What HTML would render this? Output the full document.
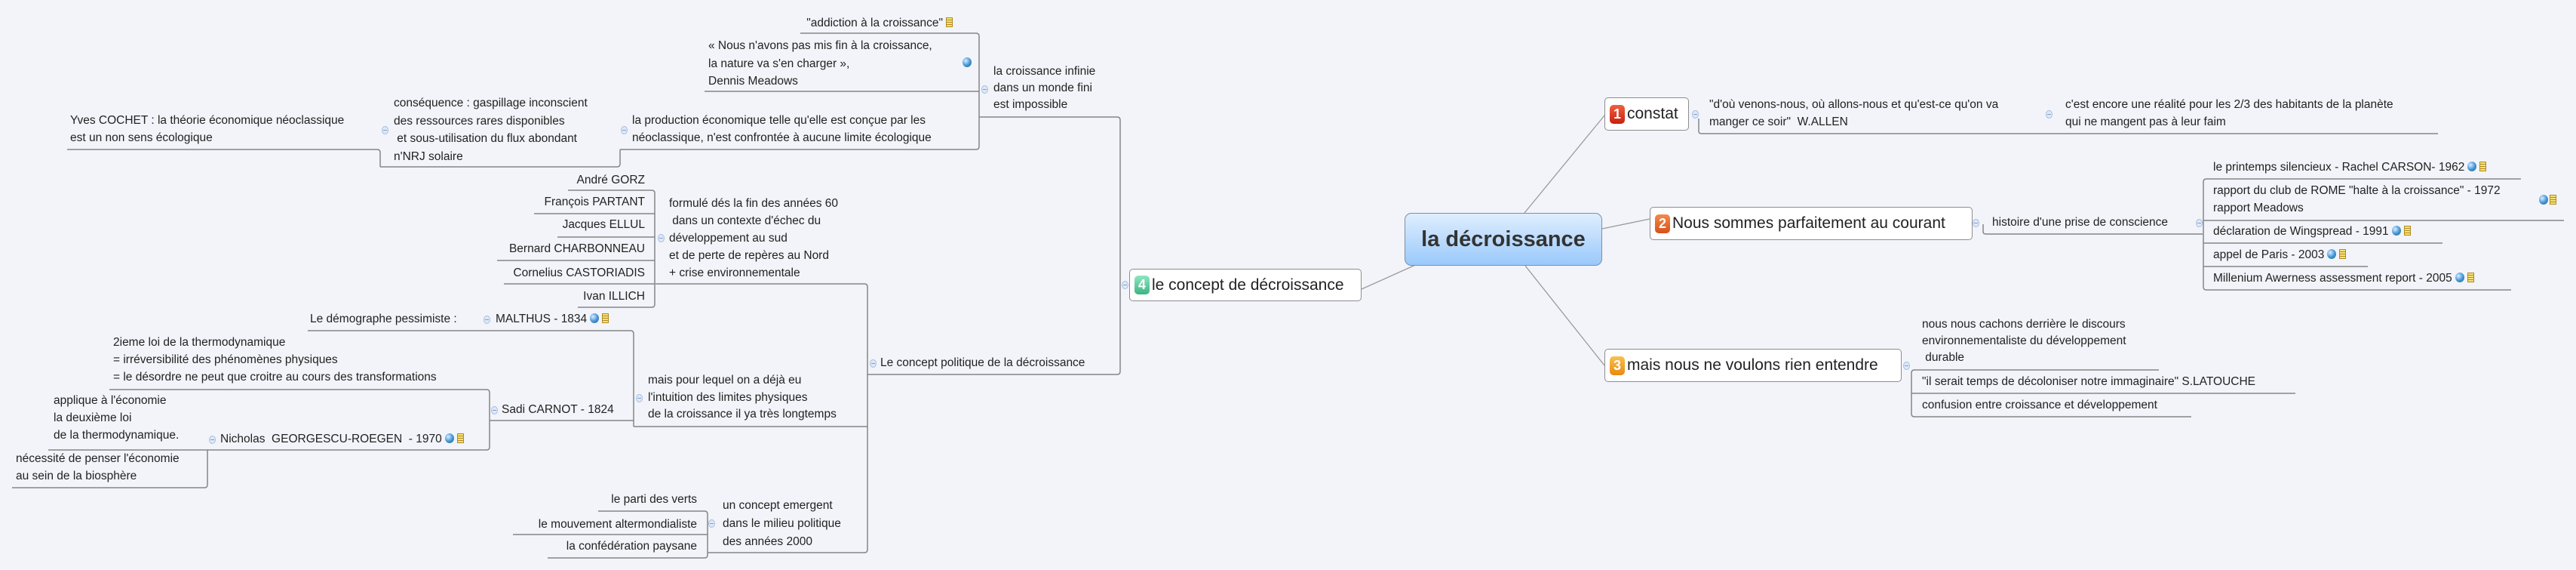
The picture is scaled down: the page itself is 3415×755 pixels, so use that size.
<!DOCTYPE html>
<html><head><meta charset="utf-8"><style>
html,body{margin:0;padding:0}
body{width:3415px;height:755px;background:#f2f4f9;position:relative;overflow:hidden;font-family:"Liberation Sans",sans-serif;color:#222}
.t{position:absolute;white-space:nowrap;font-size:15.5px;line-height:23px}
.r{text-align:right}
.n{position:absolute;background:#fff;border:1.5px solid #8d8d8d;border-radius:5px;box-sizing:border-box;font-size:21px;white-space:nowrap;display:flex;align-items:center;padding-left:6px;color:#222}
.b{display:inline-block;width:20px;height:25px;border-radius:5px;color:#fff;font-weight:bold;font-size:18px;text-align:center;line-height:25px;margin-right:3px}
.c{position:absolute;width:9px;height:11px;border-radius:50%;background:#dfe9f8;border:1px solid #a9bfe2;box-sizing:border-box}
.c:after{content:"";position:absolute;left:1px;right:1px;top:4px;height:1px;background:#7e9ccc}
.g{display:inline-block;width:12px;height:13px;border-radius:50%;background:radial-gradient(circle at 35% 35%,#d8f0ff,#3f8fd8 55%,#2f7a3a);vertical-align:-1px;margin-left:4px}
.p{display:inline-block;width:9px;height:13px;background:#f7e27a;border:1px solid #b08a20;box-sizing:border-box;vertical-align:-1px;margin-left:4px;background-image:repeating-linear-gradient(#f7e27a 0 2px,#b08a20 2px 3px)}
</style></head><body>
<svg width="3415" height="755" style="position:absolute;left:0;top:0" fill="none">
<g stroke="#9a9a9a" stroke-width="1.3">
<path d="M2021,282 L2127,153"/><path d="M2124,303 L2187,290"/><path d="M2022,352 L2127,484"/><path d="M1883,348 L1805,383"/>
</g>
<g stroke="#858585" stroke-width="1.5">
<path d="M2252,157 V174 Q2252,177 2256,177 H3232"/>
<path d="M2629,297 V307 Q2629,310 2633,310 H2920"/>
<path d="M3342,237 H2925 Q2921,237 2921,241 V380 Q2921,384 2925,384 H3329"/>
<path d="M2921,292 H3399"/><path d="M2921,322 H3238"/><path d="M2921,353 H3139"/>
<path d="M2862,490 H2538 Q2534,490 2534,494 V548 Q2534,552 2538,552 H2905"/>
<path d="M2534,521 H3043"/>
<path d="M1298,155 H1481 Q1485,155 1485,159 V492 Q1485,496 1481,496 H1150"/>
<path d="M1061,44 H1294 Q1298,44 1298,48 V194 Q1298,198 1294,198 H822"/>
<path d="M934,121 H1298"/>
<path d="M822,198 V217 Q822,221 818,221 H504"/>
<path d="M504,221 V202 Q504,198 500,198 H89"/>
<path d="M869,376 H1146 Q1150,376 1150,380 V728 Q1150,732 1146,732 H938"/>
<path d="M840,565 H1150"/>
<path d="M753,252 H864 Q868,252 868,256 V403 Q868,407 864,407 H766"/>
<path d="M708,283 H868"/><path d="M739,314 H868"/><path d="M659,345 H868"/><path d="M668,376 H868"/>
<path d="M408,438 H836 Q840,438 840,442 V565"/>
<path d="M649,557 H840"/>
<path d="M145,516 H645 Q649,516 649,520 V592 Q649,596 645,596 H275"/>
<path d="M64,596 H275 V642 Q275,646 271,646 H16"/>
<path d="M793,677 H934 Q938,677 938,681 V735 Q938,739 934,739 H726"/>
<path d="M680,708 H938"/>
</g>
</svg>

<div style="position:absolute;left:1862px;top:282px;width:262px;height:70px;border:1.5px solid #7d8fa6;border-radius:9px;box-sizing:border-box;background:linear-gradient(#dfeefe,#99c9fb);display:flex;align-items:center;justify-content:center;font-weight:bold;font-size:29px;color:#333">la décroissance</div>

<div class="n" style="left:2127px;top:129px;width:112px;height:44px"><span class="b" style="background:linear-gradient(#f06040,#c8200c)">1</span>constat</div>
<div class="n" style="left:2187px;top:274px;width:428px;height:44px"><span class="b" style="background:linear-gradient(#f58a4a,#d8501a)">2</span>Nous sommes parfaitement au courant</div>
<div class="n" style="left:2127px;top:462px;width:394px;height:44px"><span class="b" style="background:linear-gradient(#f8c050,#e88a10)">3</span>mais nous ne voulons rien entendre</div>
<div class="n" style="left:1497px;top:356px;width:308px;height:43px"><span class="b" style="background:linear-gradient(#8ee6c0,#3cb484)">4</span>le concept de décroissance</div>

<div class="c" style="left:2243px;top:146px"></div>
<div class="c" style="left:2712px;top:146px"></div>
<div class="c" style="left:2615px;top:290px"></div>
<div class="c" style="left:2911px;top:290px"></div>
<div class="c" style="left:2523px;top:479px"></div>
<div class="c" style="left:1487px;top:372px"></div>
<div class="c" style="left:1301px;top:113px"></div>
<div class="c" style="left:823px;top:167px"></div>
<div class="c" style="left:506px;top:167px"></div>
<div class="c" style="left:872px;top:310px"></div>
<div class="c" style="left:1153px;top:476px"></div>
<div class="c" style="left:843px;top:522px"></div>
<div class="c" style="left:641px;top:418px"></div>
<div class="c" style="left:651px;top:538px"></div>
<div class="c" style="left:277px;top:577px"></div>
<div class="c" style="left:939px;top:688px"></div>

<div class="t" style="left:2266px;top:127px">"d'où venons-nous, où allons-nous et qu'est-ce qu'on va<br>manger ce soir"&nbsp; W.ALLEN</div>
<div class="t" style="left:2738px;top:127px">c'est encore une réalité pour les 2/3 des habitants de la planète<br>qui ne mangent pas à leur faim</div>
<div class="t" style="left:2641px;top:283px">histoire d'une prise de conscience</div>
<div class="t" style="left:2934px;top:210px">le printemps silencieux - Rachel CARSON- 1962<span class="g"></span><span class="p"></span></div>
<div class="t" style="left:2934px;top:241px">rapport du club de ROME "halte à la croissance" - 1972<br>rapport Meadows</div>
<span class="g" style="position:absolute;left:3362px;top:258px"></span><span class="p" style="position:absolute;left:3376px;top:258px"></span>
<div class="t" style="left:2934px;top:295px">déclaration de Wingspread - 1991<span class="g"></span><span class="p"></span></div>
<div class="t" style="left:2934px;top:326px">appel de Paris - 2003<span class="g"></span><span class="p"></span></div>
<div class="t" style="left:2934px;top:357px">Millenium Awerness assessment report - 2005<span class="g"></span><span class="p"></span></div>

<div class="t" style="left:2548px;top:419px;line-height:22px">nous nous cachons derrière le discours<br>environnementaliste du développement<br>&nbsp;durable</div>
<div class="t" style="left:2548px;top:494px">"il serait temps de décoloniser notre immaginaire" S.LATOUCHE</div>
<div class="t" style="left:2548px;top:525px">confusion entre croissance et développement</div>

<div class="t" style="left:1317px;top:84px;line-height:22px">la croissance infinie<br>dans un monde fini<br>est impossible</div>
<div class="t r" style="right:2152px;top:19px">"addiction à la croissance"<span class="p"></span></div>
<div class="t" style="left:939px;top:49px;line-height:23.5px">« Nous n'avons pas mis fin à la croissance,<br>la nature va s'en charger »,<br>Dennis Meadows</div>
<span class="g" style="position:absolute;left:1272px;top:76px"></span>
<div class="t" style="left:838px;top:148px">la production économique telle qu'elle est conçue par les<br>néoclassique, n'est confrontée à aucune limite écologique</div>
<div class="t" style="left:522px;top:125px;line-height:23.7px">conséquence : gaspillage inconscient<br>des ressources rares disponibles<br>&nbsp;et sous-utilisation du flux abondant<br>n'NRJ solaire</div>
<div class="t" style="left:93px;top:148px">Yves COCHET : la théorie économique néoclassique<br>est un non sens écologique</div>

<div class="t" style="left:887px;top:258px;line-height:23px">formulé dés la fin des années 60<br>&nbsp;dans un contexte d'échec du<br>développement au sud<br>et de perte de repères au Nord<br>+ crise environnementale</div>
<div class="t r" style="right:2560px;top:227px">André GORZ</div>
<div class="t r" style="right:2560px;top:256px">François PARTANT</div>
<div class="t r" style="right:2560px;top:286px">Jacques ELLUL</div>
<div class="t r" style="right:2560px;top:318px">Bernard CHARBONNEAU</div>
<div class="t r" style="right:2560px;top:350px">Cornelius CASTORIADIS</div>
<div class="t r" style="right:2560px;top:381px">Ivan ILLICH</div>

<div class="t" style="left:1167px;top:469px">Le concept politique de la décroissance</div>
<div class="t" style="left:859px;top:493px;line-height:22.5px">mais pour lequel on a déjà eu<br>l'intuition des limites physiques<br>de la croissance il ya très longtemps</div>
<div class="t" style="left:411px;top:411px">Le démographe pessimiste :</div>
<div class="t" style="left:657px;top:411px">MALTHUS - 1834<span class="g"></span><span class="p"></span></div>
<div class="t" style="left:665px;top:531px">Sadi CARNOT - 1824</div>
<div class="t" style="left:150px;top:442px">2ieme loi de la thermodynamique<br>= irréversibilité des phénomènes physiques<br>= le désordre ne peut que croitre au cours des transformations</div>
<div class="t" style="left:292px;top:570px">Nicholas&nbsp; GEORGESCU-ROEGEN&nbsp; - 1970<span class="g"></span><span class="p"></span></div>
<div class="t" style="left:71px;top:519px;line-height:23px">applique à l'économie<br>la deuxième loi<br>de la thermodynamique.</div>
<div class="t" style="left:21px;top:596px">nécessité de penser l'économie<br>au sein de la biosphère</div>

<div class="t" style="left:958px;top:658px;line-height:24px">un concept emergent<br>dans le milieu politique<br>des années 2000</div>
<div class="t r" style="right:2491px;top:650px">le parti des verts</div>
<div class="t r" style="right:2491px;top:683px">le mouvement altermondialiste</div>
<div class="t r" style="right:2491px;top:712px">la confédération paysane</div>
</body></html>
